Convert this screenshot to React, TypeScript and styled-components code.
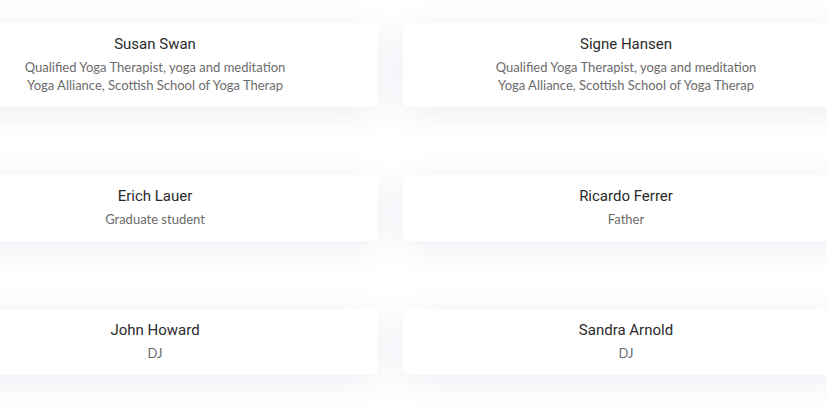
import React from 'react';
import styled, { createGlobalStyle } from 'styled-components';

const GlobalStyle = createGlobalStyle`
  html, body {
    margin: 0;
    padding: 0;
    background: #ffffff;
    overflow: hidden;
  }
  * {
    box-sizing: border-box;
  }
`;

type Member = {
  name: string;
  lines: string[];
};

const members: Member[] = [
  {
    name: 'Susan Swan',
    lines: [
      'Qualified Yoga Therapist, yoga and meditation',
      'Yoga Alliance, Scottish School of Yoga Therap',
    ],
  },
  {
    name: 'Signe Hansen',
    lines: [
      'Qualified Yoga Therapist, yoga and meditation',
      'Yoga Alliance, Scottish School of Yoga Therap',
    ],
  },
  { name: 'Erich Lauer', lines: ['Graduate student'] },
  { name: 'Ricardo Ferrer', lines: ['Father'] },
  { name: 'John Howard', lines: ['DJ'] },
  { name: 'Sandra Arnold', lines: ['DJ'] },
];

const App = () => {
  return (
    <>
      <GlobalStyle />
      <TeamSection>
        <TeamGrid>
          {members.map((m) => (
            <Card key={m.name}>
              <Name>{m.name}</Name>
              <Info>
                {m.lines.map((line) => (
                  <p key={line}>{line}</p>
                ))}
              </Info>
            </Card>
          ))}
        </TeamGrid>
      </TeamSection>
    </>
  );
};

const TeamSection = styled.section`
  width: 827px;
  height: 412px;
  overflow: hidden;
  padding-top: 23px;
`;

const TeamGrid = styled.div`
  margin-left: -68px;
  display: grid;
  grid-template-columns: 446px 446px;
  column-gap: 25px;
  row-gap: 68px;
  align-items: start;
`;

const Card = styled.div`
  background: #ffffff;
  border-radius: 7px;
  padding: 11px 16px 13px;
  text-align: center;
  box-shadow: 0 6px 34px rgba(60, 70, 130, 0.09);
`;

const Name = styled.h3`
  margin: 0;
  font-family: 'Roboto', 'Liberation Sans', sans-serif;
  font-weight: 400;
  font-size: 15px;
  line-height: 20px;
  color: #2b2b2b;
`;

const Info = styled.div`
  margin-top: 4px;

  p {
    margin: 0;
    font-family: 'Lato', 'Liberation Sans', sans-serif;
    font-size: 13px;
    line-height: 18px;
    color: #6c6c6c;
  }
`;

export default App;
